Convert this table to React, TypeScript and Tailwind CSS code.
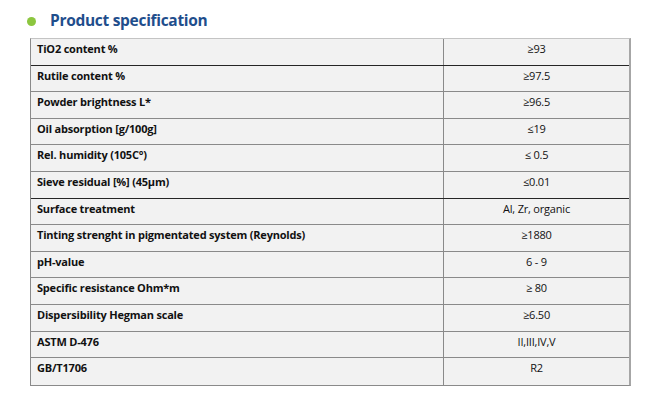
const rows: [string, string][] = [
  ["TiO2 content %", "≥93"],
  ["Rutile content %", "≥97.5"],
  ["Powder brightness L*", "≥96.5"],
  ["Oil absorption [g/100g]", "≤19"],
  ["Rel. humidity (105C°)", "≤ 0.5"],
  ["Sieve residual [%] (45μm)", "≤0.01"],
  ["Surface treatment", "Al, Zr, organic"],
  ["Tinting strenght in pigmentated system (Reynolds)", "≥1880"],
  ["pH-value", "6 - 9"],
  ["Specific resistance Ohm*m", "≥ 80"],
  ["Dispersibility Hegman scale", "≥6.50"],
  ["ASTM D-476", "II,III,IV,V"],
  ["GB/T1706", "R2"],
]

// lines under these rows are drawn dark
const darkAfter = [0, 5]

export default function App() {
  return (
    <div className="w-[656px] h-[402px] bg-white font-['Open_Sans',sans-serif] text-[#111]">
      <div className="flex items-center gap-[14px] pl-[27px] pt-[4px] h-[38px]">
        <span className="w-[9px] h-[9px] rounded-full bg-[#8cc63f]" />
        <h2 className="text-[15.5px] font-bold text-[#1f4e8c] tracking-[-0.3px]">Product specification</h2>
      </div>
      <div className="ml-[30px] w-[601px] border-l border-b border-[#8a8a8a] border-t border-t-[#c4c4c4] border-r-2 border-r-[#a6a6a6] bg-[#f2f2f2]">
        {rows.map(([label, value], i) => (
          <div
            key={label}
            className={`flex h-[26.6px] ${i < rows.length - 1 ? "border-b" : ""} ${darkAfter.includes(i) ? "border-[#262626]" : "border-[#8a8a8a]"}`}
          >
            <div className="w-[413px] shrink-0 border-r border-[#8a8a8a] pl-[6px] pt-[3px] text-[11px] font-bold leading-[14px] tracking-[-0.2px]">
              {label}
            </div>
            <div className="flex-1 text-center pt-[3px] text-[11px] leading-[14px] tracking-[-0.2px]">{value}</div>
          </div>
        ))}
      </div>
    </div>
  )
}
